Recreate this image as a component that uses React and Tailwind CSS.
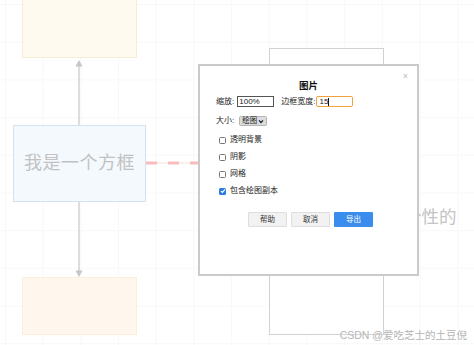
import React from 'react';

const font = { fontFamily: '"Liberation Sans", "Noto Sans CJK SC", sans-serif' };

// Checkbox row inside the dialog
function CheckRow({ label, checked }) {
    return (
        <div className="flex items-center h-[10px] gap-[4px] pl-[3px]">
            {checked ? (
                <span className="w-[7px] h-[7px] rounded-[1.5px] bg-[#2c7be5] flex items-center justify-center">
                    <svg width="6" height="6" viewBox="0 0 6 6">
                        <path d="M1 3.1 L2.4 4.4 L5 1.4" stroke="#fff" strokeWidth="1.2" fill="none" />
                    </svg>
                </span>
            ) : (
                <span className="w-[7px] h-[7px] rounded-[1.5px] border border-[#777] bg-white" />
            )}
            <span className="text-[8px] leading-none text-[#222]">{label}</span>
        </div>
    );
}

function Button({ children, primary }) {
    return (
        <div
            className={`w-[39px] h-[15px] flex items-center justify-center text-[7.5px] rounded-[1px] ${
                primary ? 'bg-[#3b8ded] text-white' : 'bg-[#f2f2f2] border border-[#dedede] text-[#333]'
            }`}
        >
            {children}
        </div>
    );
}

export default function App() {
    return (
        <div
            className="relative w-[474px] h-[345px] overflow-hidden bg-white bg-[linear-gradient(to_right,#f8f8f8_1px,transparent_1px),linear-gradient(to_bottom,#f8f8f8_1px,transparent_1px)] bg-[size:37.7px_37.7px] bg-[position:5px_4px]"
            style={font}
        >
            {/* Diagram nodes */}
            <div className="absolute left-[22px] top-[-10px] w-[115px] h-[68px] bg-[#fffaf0] border border-[#f6edd6]" />
            <div className="absolute left-[13px] top-[125px] w-[133px] h-[77px] bg-[#f4f9fe] border border-[#d5e3f0] flex items-center justify-center">
                <span className="text-[18px] text-[#c2c2c2] tracking-[0.5px]">我是一个方框</span>
            </div>
            <div className="absolute left-[22px] top-[277px] w-[115px] h-[58px] bg-[#fff7ee] border border-[#fbeedc]" />
            <div className="absolute left-[269px] top-[48px] w-[115px] h-[287px] bg-white border-[1.5px] border-[#d2d2d2]" />

            {/* Connectors */}
            <svg className="absolute left-0 top-0" width="474" height="345">
                <line x1="79" y1="65" x2="79" y2="125" stroke="#c6c6c6" strokeWidth="1.2" />
                <path d="M75.5 66.5 L79 60 L82.5 66.5 Z" fill="#c6c6c6" />
                <line x1="79" y1="202" x2="79" y2="272" stroke="#c6c6c6" strokeWidth="1.2" />
                <path d="M75.5 270.5 L79 277 L82.5 270.5 Z" fill="#c6c6c6" />
                <line x1="146" y1="163" x2="200" y2="163" stroke="#f3d6d6" strokeWidth="0.8" />
                <line x1="146" y1="163" x2="200" y2="163" stroke="#f8bcbc" strokeWidth="3" strokeDasharray="11 11" />
            </svg>

            {/* Text of a node hidden behind the dialog */}
            <span className="absolute left-[404px] top-[207px] text-[17.5px] leading-[21px] text-[#c4c4c4] whitespace-nowrap">个性的</span>
            <span className="absolute left-[401px] top-[230px] text-[17.5px] leading-[21px] text-[#c4c4c4]">形</span>

            {/* Dialog */}
            <div className="absolute left-[198px] top-[64px] w-[221px] h-[212px] bg-white border-2 border-[#cacaca] flex flex-col px-[16px] pt-[15px]">
                <span className="absolute right-[9px] top-[6px] text-[9px] leading-none text-[#b8b8b8]">×</span>
                <div className="h-[10px] flex items-center justify-center text-[9.5px] font-bold text-[#111]">图片</div>

                <div className="mt-[5px] h-[11px] flex items-center text-[8px] text-[#222]">
                    <span>缩放:</span>
                    <div className="ml-[3px] w-[37px] h-[11px] border border-[#555] flex items-center px-[1px] text-[8px] leading-none">100%</div>
                    <span className="ml-[7px]">边框宽度:</span>
                    <div className="ml-[1px] w-[37px] h-[11px] border border-[#f2a23c] rounded-[2px] flex items-center px-[2px] text-[8px] leading-none">
                        15<span className="w-px h-[8px] bg-[#111]" />
                    </div>
                </div>

                <div className="mt-[9px] h-[10px] flex items-center text-[8px] text-[#222]">
                    <span>大小:</span>
                    <div className="ml-[5px] h-[10px] px-[2px] bg-[#dcdcdc] border border-[#b5b5b5] rounded-[1.5px] flex items-center gap-[1px] text-[7.5px] leading-none">
                        绘图
                        <svg width="6" height="5" viewBox="0 0 6 5">
                            <path d="M1 1.3 L3 3.5 L5 1.3" stroke="#222" strokeWidth="1.2" fill="none" />
                        </svg>
                    </div>
                </div>

                <div className="mt-[9px] flex flex-col gap-[7px]">
                    <CheckRow label="透明背景" />
                    <CheckRow label="阴影" />
                    <CheckRow label="网格" />
                    <CheckRow label="包含绘图副本" checked />
                </div>

                <div className="mt-[16px] flex justify-center gap-[4px] pl-[4px]">
                    <Button>帮助</Button>
                    <Button>取消</Button>
                    <Button primary>导出</Button>
                </div>
            </div>

            {/* Watermark */}
            <span className="absolute right-[7px] top-[328px] whitespace-nowrap text-[10.5px] leading-[14px] text-[#b4b4b4] [text-shadow:0_0_1px_#fff]">
                CSDN @爱吃芝士的土豆倪
            </span>
        </div>
    );
}
